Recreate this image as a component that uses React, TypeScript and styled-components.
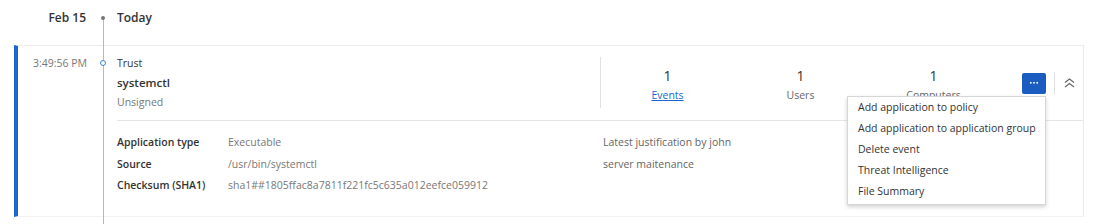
import React from 'react';
import styled, { createGlobalStyle } from 'styled-components';

const GlobalStyle = createGlobalStyle`
  html, body { margin: 0; padding: 0; background: #fff; }
  body {
    font-family: "Open Sans", "Liberation Sans", sans-serif;
    color: #333;
    -webkit-font-smoothing: antialiased;
  }
  * { box-sizing: border-box; }
`;

const Page = styled.div`
  position: relative;
  width: 1101px;
  height: 224px;
  overflow: hidden;
  &::before {
    content: '';
    position: absolute;
    left: 103px;
    top: 17px;
    bottom: 0;
    width: 1px;
    background: #b8b8b8;
    z-index: 2;
  }
`;

const DayHeader = styled.div`
  display: flex;
  align-items: center;
  height: 45px;
  padding-bottom: 10px;
  font-size: 12px;
  font-weight: 600;
  line-height: 18px;
  color: #333;
`;

const DateLabel = styled.div`
  width: 86px;
  text-align: right;
`;

const DotCell = styled.div`
  width: 31px;
  padding-left: 3px;
  display: flex;
  justify-content: center;
  align-items: center;
`;

const SmallDot = styled.span`
  position: relative;
  z-index: 3;
  width: 4px;
  height: 4px;
  border-radius: 50%;
  background: #777;
`;

const Card = styled.div`
  display: flex;
  margin: 0 17px 0 14px;
  background: #fff;
  border: 1px solid #ebebeb;
  border-bottom-color: #f3f3f3;
  border-left: 4px solid #1b66d2;
`;

const Gutter = styled.div`
  width: 99px;
  flex: none;
  display: flex;
  align-items: flex-start;
  padding-top: 9px;
`;

const TimeText = styled.div`
  width: 69px;
  text-align: right;
  font-size: 10.5px;
  line-height: 16px;
  color: #777;
`;

const RingCell = styled.div`
  width: 30px;
  height: 16px;
  padding-left: 2px;
  display: flex;
  align-items: center;
  justify-content: center;
`;

const Ring = styled.span`
  position: relative;
  z-index: 3;
  width: 6px;
  height: 6px;
  border-radius: 50%;
  border: 1px solid #3d7fd9;
  background: #fff;
`;

const Main = styled.div`
  flex: 1;
  min-width: 0;
  display: flex;
  flex-direction: column;
`;

const TopSection = styled.div`
  display: flex;
  height: 75px;
  border-bottom: 1px solid #e6e6e6;
`;

const NameBlock = styled.div`
  width: 483px;
  padding-top: 9px;
  display: flex;
  flex-direction: column;
`;

const Kind = styled.div`
  font-size: 10.5px;
  line-height: 16px;
  color: #333;
`;

const AppName = styled.div`
  margin-top: 3px;
  font-size: 11.5px;
  font-weight: 600;
  line-height: 18px;
  color: #333;
`;

const Signature = styled.div`
  margin-top: 2px;
  font-size: 10.5px;
  line-height: 16px;
  color: #777;
`;

const Stats = styled.div`
  width: 400px;
  margin: 11px 0 12px;
  border-left: 1px solid #e0e0e0;
  display: grid;
  grid-template-columns: repeat(3, 1fr);
`;

const Stat = styled.div`
  padding-top: 9px;
  display: flex;
  flex-direction: column;
  align-items: center;
`;

const StatNumber = styled.div`
  font-size: 14px;
  line-height: 20px;
  color: #333;
`;

const StatLabel = styled.div<{ $link?: boolean }>`
  margin-top: 1px;
  font-size: 10.5px;
  line-height: 16px;
  color: ${p => (p.$link ? '#1b66d2' : '#666')};
  text-decoration: ${p => (p.$link ? 'underline' : 'none')};
`;

const Actions = styled.div`
  display: flex;
  align-items: center;
  padding-left: 22px;
`;

const MenuAnchor = styled.div`
  position: relative;
`;

const MoreButton = styled.button`
  width: 24px;
  height: 21px;
  padding: 0;
  border: none;
  border-radius: 2px;
  background: #1a5cc0;
  display: flex;
  align-items: center;
  justify-content: center;
`;

const ActionDivider = styled.span`
  width: 1px;
  height: 21px;
  margin-left: 8px;
  background: #e0e0e0;
`;

const CollapseButton = styled.button`
  width: 28px;
  height: 21px;
  padding: 0;
  border: none;
  background: transparent;
  display: flex;
  align-items: center;
  justify-content: center;
`;

const Menu = styled.ul`
  position: absolute;
  top: calc(100% + 2px);
  right: 0;
  z-index: 5;
  width: 199px;
  margin: 0;
  padding: 0 0 2px;
  list-style: none;
  background: #fff;
  border: 1px solid #d6d6d6;
  box-shadow: 0 2px 4px rgba(0, 0, 0, 0.18);
`;

const MenuItem = styled.li`
  padding: 0 10px;
  font-size: 10.5px;
  line-height: 21px;
  color: #333;
  white-space: nowrap;
`;

const Details = styled.div`
  display: flex;
  padding: 13px 0 23px;
`;

const Props = styled.div`
  width: 486px;
  display: grid;
  grid-template-columns: 111px 1fr;
  row-gap: 5.5px;
  font-size: 10.5px;
  line-height: 16px;
`;

const PropLabel = styled.div`
  font-weight: 600;
  color: #333;
`;

const PropValue = styled.div`
  color: #777;
`;

const Justification = styled.div`
  display: flex;
  flex-direction: column;
  gap: 5.5px;
  font-size: 10.5px;
  line-height: 16px;
  color: #666;
`;

const Dots = () => (
  <svg width="10" height="4" viewBox="0 0 10 4">
    <rect x="1" y="1" width="1.6" height="1.6" fill="#fff" />
    <rect x="4.2" y="1" width="1.6" height="1.6" fill="#fff" />
    <rect x="7.4" y="1" width="1.6" height="1.6" fill="#fff" />
  </svg>
);

const DoubleChevronUp = () => (
  <svg width="11" height="10" viewBox="0 0 11 10" fill="none" stroke="#666" strokeWidth="1.1">
    <polyline points="1,4.5 5.5,1 10,4.5" />
    <polyline points="1,9 5.5,5.5 10,9" />
  </svg>
);

const menuItems = [
  'Add application to policy',
  'Add application to application group',
  'Delete event',
  'Threat Intelligence',
  'File Summary',
];

export default function App() {
  return (
    <Page>
      <GlobalStyle />
      <DayHeader>
        <DateLabel>Feb 15</DateLabel>
        <DotCell>
          <SmallDot />
        </DotCell>
        <div>Today</div>
      </DayHeader>
      <Card>
        <Gutter>
          <TimeText>3:49:56 PM</TimeText>
          <RingCell>
            <Ring />
          </RingCell>
        </Gutter>
        <Main>
          <TopSection>
            <NameBlock>
              <Kind>Trust</Kind>
              <AppName>systemctl</AppName>
              <Signature>Unsigned</Signature>
            </NameBlock>
            <Stats>
              <Stat>
                <StatNumber>1</StatNumber>
                <StatLabel $link>Events</StatLabel>
              </Stat>
              <Stat>
                <StatNumber>1</StatNumber>
                <StatLabel>Users</StatLabel>
              </Stat>
              <Stat>
                <StatNumber>1</StatNumber>
                <StatLabel>Computers</StatLabel>
              </Stat>
            </Stats>
            <Actions>
              <MenuAnchor>
                <MoreButton aria-label="More">
                  <Dots />
                </MoreButton>
                <Menu>
                  {menuItems.map(item => (
                    <MenuItem key={item}>{item}</MenuItem>
                  ))}
                </Menu>
              </MenuAnchor>
              <ActionDivider />
              <CollapseButton aria-label="Collapse">
                <DoubleChevronUp />
              </CollapseButton>
            </Actions>
          </TopSection>
          <Details>
            <Props>
              <PropLabel>Application type</PropLabel>
              <PropValue>Executable</PropValue>
              <PropLabel>Source</PropLabel>
              <PropValue>/usr/bin/systemctl</PropValue>
              <PropLabel>Checksum (SHA1)</PropLabel>
              <PropValue>sha1##1805ffac8a7811f221fc5c635a012eefce059912</PropValue>
            </Props>
            <Justification>
              <div>Latest justification by john</div>
              <div>server maitenance</div>
            </Justification>
          </Details>
        </Main>
      </Card>
    </Page>
  );
}
